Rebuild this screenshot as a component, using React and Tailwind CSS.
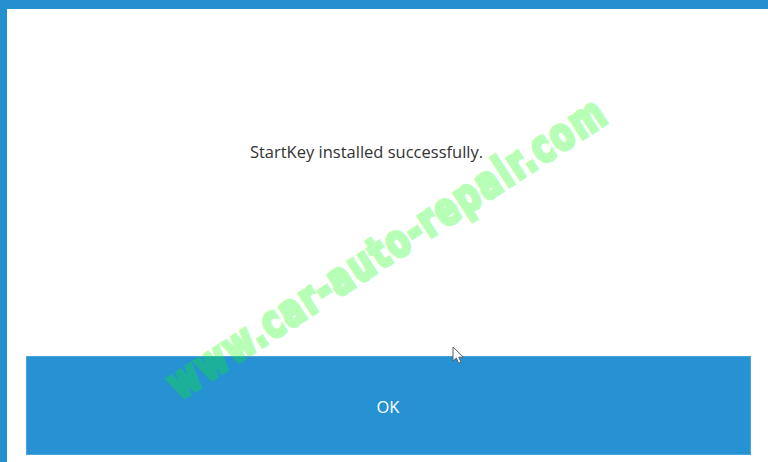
import React from 'react';

const CursorIcon = (props) => (
    <svg width="13" height="19" viewBox="0 0 13 19" {...props}>
        <path d="M1 1v14l3.4-3 2.2 5.2 2.4-1-2.2-5h4.6z" fill="#ffffff" stroke="#55606a" strokeWidth="1" strokeLinejoin="round" />
    </svg>
);

export default function App() {
    return (
        <div className="relative w-[768px] h-[462px] overflow-hidden bg-white border-t-[9px] border-l-[7px] border-[#2490d0] flex flex-col font-['Open_Sans',sans-serif]">
            <div className="flex-1 flex justify-center pt-[132px] pr-[42px]">
                <p className="text-[16.5px] leading-[22px] text-[#333333]">StartKey installed successfully.</p>
            </div>

            <button className="ml-[19px] mr-[17px] mb-[7px] h-[99px] pt-[3px] pr-[1px] bg-[#2692d3] border border-[#4aa3da] text-white text-[16.5px]">
                OK
            </button>

            {/* cursor + watermark sit over everything */}
            <CursorIcon className="absolute left-[445px] top-[337px]" />
            <div className="absolute left-[80px] top-[214px] w-[600px] text-center -rotate-[33deg] scale-y-[1.35] whitespace-nowrap pointer-events-none opacity-[0.28] font-['DejaVu_Sans',sans-serif] font-bold text-[33px] tracking-[2px] leading-[50px] text-[#00ff00] [-webkit-text-stroke:3px_#00ff00]">
                www.car-auto-repair.com
            </div>
        </div>
    );
}
